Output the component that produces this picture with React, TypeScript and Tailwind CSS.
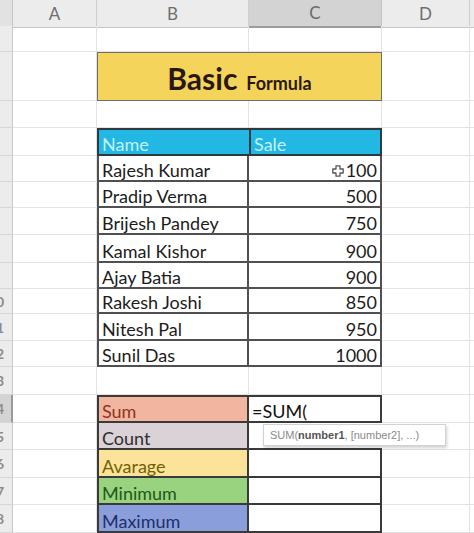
import React from "react";

const GRID = "grid grid-cols-[13px_84px_152px_133px_88px_1fr]";
const EMPTY = "border-r border-b border-[#e3e3e3]";
const FONT = { fontFamily: "Lato, 'Noto Sans', sans-serif" } as const;

function RowHead({ num, active }: { num: string; active?: boolean }) {
  return (
    <div
      className={`relative overflow-hidden border-b border-[#d6d6d6] ${
        active ? "bg-[#d4d4d4] border-r-2 border-r-[#9a9a9a]" : "bg-[#ececec] border-r border-r-[#c9c9c9]"
      }`}
    >
      <div className="absolute inset-y-0 left-[-20px] w-[32px] flex items-center justify-center text-[14px] font-bold text-[#8a8a8a]">
        {num}
      </div>
    </div>
  );
}

function Row({
  h,
  num,
  active,
  children,
}: {
  h: string;
  num: string;
  active?: boolean;
  children?: React.ReactNode;
}) {
  return (
    <div className={`${GRID} ${h}`}>
      <RowHead num={num} active={active} />
      <div className={EMPTY} />
      {children ?? (
        <>
          <div className={EMPTY} />
          <div className={EMPTY} />
        </>
      )}
      <div className={EMPTY} />
      <div className="border-b border-[#e3e3e3]" />
    </div>
  );
}

function Cursor() {
  return (
    <svg width="12" height="12" viewBox="0 0 12 12" className="mr-[2px] mb-[3px]">
      <path
        d="M4 0.8 H8 V4 H11.2 V8 H8 V11.2 H4 V8 H0.8 V4 H4 Z"
        fill="#ffffff"
        stroke="#555"
        strokeWidth="1.3"
        strokeLinejoin="round"
      />
    </svg>
  );
}

const data: [string, string, string][] = [
  ["Rajesh Kumar", "100", "h-[26px]"],
  ["Pradip Verma", "500", "h-[26px]"],
  ["Brijesh Pandey", "750", "h-[27px]"],
  ["Kamal Kishor", "900", "h-[28px]"],
  ["Ajay Batia", "900", "h-[26px]"],
  ["Rakesh Joshi", "850", "h-[25px]"],
  ["Nitesh Pal", "950", "h-[27px]"],
  ["Sunil Das", "1000", "h-[26px]"],
];

const TB = "border-l-2 border-r-2 border-b-2 border-[#505050] flex items-end pl-[3px] leading-[20px] text-[18px] text-[#1c1c1c]";
const TC = "border-r-2 border-b-2 border-[#505050] flex items-end justify-end pr-[3px] leading-[20px] text-[18px] text-[#1c1c1c]";

const stats: { label: string; bg: string; fg: string; h: string }[] = [
  { label: "Sum", bg: "bg-[#f2b59f]", fg: "text-[#8c3524]", h: "h-[28px]" },
  { label: "Count", bg: "bg-[#dbd2d8]", fg: "text-[#2e2e2e]", h: "h-[27px]" },
  { label: "Avarage", bg: "bg-[#fce39a]", fg: "text-[#736004]", h: "h-[28px]" },
  { label: "Minimum", bg: "bg-[#99d37f]", fg: "text-[#225816]", h: "h-[27px]" },
  { label: "Maximum", bg: "bg-[#8a9edb]", fg: "text-[#1f2f68]", h: "h-[28px]" },
];

const SB = "border-l-2 border-r-2 border-b-2 border-[#3a3a3a] flex items-end pl-[3px] leading-[20px] text-[18px]";
const SC = "border-r-2 border-b-2 border-[#3a3a3a] flex items-end pl-[3px] leading-[20px] text-[18px] text-[#111] bg-white";

export default function App() {
  return (
    <div className="w-[474px] h-[533px] overflow-hidden bg-white" style={FONT}>
      {/* column header */}
      <div className={`${GRID} h-[26px]`}>
        <div className="bg-[#e2e2e2] border-r border-b border-[#c6c6c6]" />
        {["A", "B"].map((l) => (
          <div
            key={l}
            className="bg-[#ececec] border-r border-b border-[#cfcfcf] border-b-[#c6c6c6] flex items-center justify-center text-[17px] text-[#6e6e6e]"
          >
            {l}
          </div>
        ))}
        <div className="bg-[#d3d3d3] border-r border-[#c4c4c4] border-b-2 border-b-[#9c9c9c] flex items-center justify-center text-[17px] text-[#6a6a6a]">
          C
        </div>
        <div className="bg-[#ececec] border-r border-b border-[#cfcfcf] border-b-[#c6c6c6] flex items-center justify-center text-[17px] text-[#6e6e6e]">
          D
        </div>
        <div className="bg-[#ececec] border-b border-[#c6c6c6]" />
      </div>

      <Row h="h-[26px]" num="1" />
      <Row h="h-[49px]" num="2">
        <div className="col-span-2 bg-[#f5d45b] border border-[#6e6e6e] flex items-baseline justify-center pt-[8px] text-[#2a1810] font-bold">
          <span className="text-[30px] leading-[34px]">Basic</span>
          <span className="text-[18px] ml-[9px]">Formula</span>
        </div>
      </Row>
      <Row h="h-[27px]" num="3" />
      <Row h="h-[28px]" num="4">
        <div className="bg-[#22b8e3] border-2 border-r-0 border-[#2e3a40] flex items-end pl-[3px] leading-[20px] text-[18px] text-[#c4f1fb]">
          Name
        </div>
        <div className="bg-[#22b8e3] border-2 border-[#2e3a40] flex items-end pl-[3px] leading-[20px] text-[18px] text-[#c4f1fb]">
          Sale
        </div>
      </Row>
      {data.map(([n, v, h], i) => (
        <Row key={n} h={h} num={String(i + 5)}>
          <div className={TB}>{n}</div>
          <div className={TC}>
            {i === 0 && <Cursor />}
            {v}
          </div>
        </Row>
      ))}
      <Row h="h-[28px]" num="13" />
      {stats.map((s, i) => (
        <Row key={s.label} h={s.h} num={String(i + 14)} active={i === 0}>
          <div className={`${SB} ${s.bg} ${s.fg} ${i === 0 ? "border-t-2" : ""}`}>{s.label}</div>
          {i === 0 ? (
            <div className={`${SC} border-t-2`}>=SUM(</div>
          ) : i === 1 ? (
            <div className="relative border-b-2 border-[#3a3a3a]">
              <div className="absolute left-[14px] top-[1px] w-[183px] h-[22px] bg-white border border-[#d2d2d2] shadow-[1px_2px_3px_rgba(0,0,0,0.18)] flex items-center pl-[6px] text-[11px] text-[#8a8a8a] whitespace-nowrap z-10" style={{ fontFamily: "'Liberation Sans', Arial, sans-serif" }}>
                SUM(<span className="font-bold text-[#555]">number1</span>, [number2], ...)
              </div>
            </div>
          ) : (
            <div className={SC} />
          )}
        </Row>
      ))}
    </div>
  );
}
